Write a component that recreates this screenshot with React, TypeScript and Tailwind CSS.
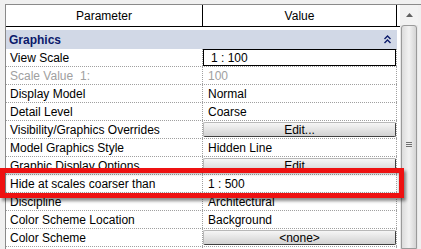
import type { ReactNode } from 'react'

type Row = {
  label: ReactNode
  kind: 'text' | 'input' | 'button' | 'muted'
  value: string
}

const rows: Row[] = [
  { label: 'View Scale', kind: 'input', value: '1 : 100' },
  {
    label: (
      <span className="flex text-[#a0a0a0]">
        <span className="w-[70px]">Scale Value</span>
        <span>1:</span>
      </span>
    ),
    kind: 'muted',
    value: '100',
  },
  { label: 'Display Model', kind: 'text', value: 'Normal' },
  { label: 'Detail Level', kind: 'text', value: 'Coarse' },
  { label: 'Visibility/Graphics Overrides', kind: 'button', value: 'Edit...' },
  { label: 'Model Graphics Style', kind: 'text', value: 'Hidden Line' },
  { label: 'Graphic Display Options', kind: 'button', value: 'Edit...' },
  { label: 'Hide at scales coarser than', kind: 'text', value: '1 : 500' },
  { label: 'Discipline', kind: 'text', value: 'Architectural' },
  { label: 'Color Scheme Location', kind: 'text', value: 'Background' },
  { label: 'Color Scheme', kind: 'button', value: '<none>' },
  { label: '', kind: 'text', value: '' },
]

function ValueCell({ row }: { row: Row }) {
  if (row.kind === 'input') {
    return (
      <div className="flex h-full items-center border border-black bg-white pl-[7px]">{row.value}</div>
    )
  }
  if (row.kind === 'button') {
    return (
      <div className="flex h-[15px] items-center justify-center rounded-[2px] border border-[#b8b8b8] border-r-[#404040] border-b-[#404040] bg-gradient-to-b from-[#f6f6f6] to-[#d2d2d2] leading-none">
        {row.value}
      </div>
    )
  }
  return (
    <div className={`flex h-full items-center pl-[5px] ${row.kind === 'muted' ? 'text-[#a0a0a0]' : ''}`}>{row.value}</div>
  )
}

export default function App() {
  return (
    <div className="relative h-[249px] w-[421px] overflow-hidden bg-[#f0f0f0] font-['Liberation_Sans',sans-serif] text-[12px] text-black">
      <div className="ml-[5px] mt-[4px] flex h-[245px] border-l border-t border-[#8a8a8a]">
        {/* grid */}
        <div className="w-[394px] bg-white">
          <div className="flex h-[22px] border-b border-black">
            <div className="flex w-[197px] items-center justify-center border-r border-black">Parameter</div>
            <div className="flex w-[194px] items-center justify-center border-r border-black">Value</div>
          </div>
          <div className="mt-[3px] flex h-[19px] w-[391px] items-center justify-between bg-[#d1d8e6] pl-[3px] pr-[6px]">
            <span className="font-bold text-[#0b1a6b]">Graphics</span>
            <svg width="7" height="9" viewBox="0 0 7 9" className="text-[#0b1a6b]">
              <path d="M0.5 4 L3.5 1 L6.5 4 M0.5 8 L3.5 5 L6.5 8" fill="none" stroke="currentColor" strokeWidth="1.4" />
            </svg>
          </div>
          {rows.map((row, i) => (
            <div key={i} className="flex h-[18px] w-[391px] border-b border-dotted border-[#a0a0a0]">
              <div className="flex w-[197px] items-center border-r border-dotted border-[#a0a0a0] pl-[4px]">
                {row.label}
              </div>
              <div className="flex w-[194px] flex-col justify-center border-r border-dotted border-[#a0a0a0]">
                <ValueCell row={row} />
              </div>
            </div>
          ))}
        </div>
        {/* scrollbar */}
        <div className="flex w-[18px] flex-col bg-[#e8e8e8]">
          <div className="flex h-[20px] items-center justify-center bg-[#f2f2f2]">
            <svg width="7" height="4" viewBox="0 0 7 4">
              <path d="M0 4 L3.5 0 L7 4 Z" fill="#606060" />
            </svg>
          </div>
          <div className="ml-[1px] mr-[1px] flex flex-1 flex-col items-center rounded-t-[3px] border border-[#9a9a9a] bg-gradient-to-r from-[#dcdcdc] via-[#f2f2f2] to-[#d4d4d4] pt-[116px]">
            <div className="flex flex-col gap-[1px]">
              <span className="h-px w-[6px] bg-[#707070]" />
              <span className="h-px w-[6px] bg-[#707070]" />
              <span className="h-px w-[6px] bg-[#707070]" />
            </div>
          </div>
        </div>
        <div className="flex-1 bg-[#f0f0f0]" />
      </div>

      {/* highlight annotation */}
      <div className="absolute left-0 top-[168px] h-[30px] w-[404px] border-[5px] border-[#ee1111] shadow-[2px_3px_3px_rgba(0,0,0,0.45),inset_0_1px_3px_rgba(0,0,0,0.35)]" />
    </div>
  )
}
